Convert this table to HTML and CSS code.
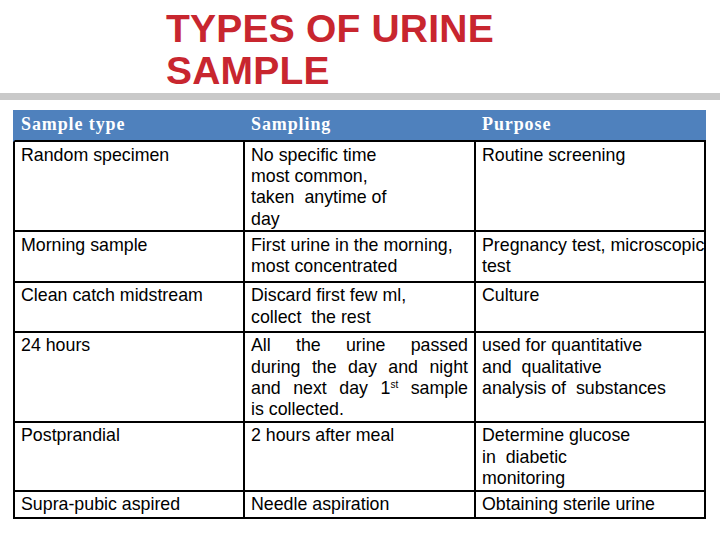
FILE: index.html
```html
<!DOCTYPE html>
<html>
<head>
<meta charset="utf-8">
<link rel="stylesheet" href="styles.css">
</head>
<body>
<header class="title-wrap">
  <h1 class="title">TYPES OF URINE<br>SAMPLE</h1>
</header>
<div class="rule"></div>
<table class="grid">
  <colgroup>
    <col class="c1"><col class="c2"><col class="c3">
  </colgroup>
  <thead>
    <tr>
      <th class="first">Sample type</th>
      <th>Sampling</th>
      <th>Purpose</th>
    </tr>
  </thead>
  <tbody>
    <tr class="r1">
      <td class="first">Random specimen</td>
      <td>No specific time<br>most common,<br>taken &nbsp;anytime of<br>day</td>
      <td>Routine screening</td>
    </tr>
    <tr class="r2">
      <td class="first">Morning sample</td>
      <td>First urine in the morning,<br>most concentrated</td>
      <td class="clip">Pregnancy test, microscopic<br>test</td>
    </tr>
    <tr class="r3">
      <td class="first">Clean catch midstream</td>
      <td>Discard first few ml,<br>collect &nbsp;the rest</td>
      <td>Culture</td>
    </tr>
    <tr class="r4">
      <td class="first">24 hours</td>
      <td class="just">
        <span class="jl">All the urine passed</span>
        <span class="jl">during the day and night</span>
        <span class="jl">and next day 1<sup>st</sup> sample</span>
        <span class="jl last">is collected.</span>
      </td>
      <td>used for quantitative<br>and &nbsp;qualitative<br>analysis of &nbsp;substances</td>
    </tr>
    <tr class="r5">
      <td class="first">Postprandial</td>
      <td>2 hours after meal</td>
      <td>Determine glucose<br>in &nbsp;diabetic<br>monitoring</td>
    </tr>
    <tr class="r6">
      <td class="first">Supra-pubic aspired</td>
      <td>Needle aspiration</td>
      <td>Obtaining sterile urine</td>
    </tr>
  </tbody>
</table>
</body>
</html>
```
FILE: styles.css
```css
html, body {
  margin: 0;
  padding: 0;
  background: #ffffff;
}
body {
  width: 720px;
  height: 540px;
  overflow: hidden;
  font-family: "Liberation Sans", Arial, sans-serif;
}
.title-wrap {
  padding: 8px 0 0 166px;
}
.title {
  margin: 0;
  font-family: "Liberation Sans", Arial, sans-serif;
  font-weight: bold;
  font-size: 39px;
  line-height: 42px;
  color: #c8262f;
  letter-spacing: 0.2px;
}
.rule {
  height: 7px;
  background: #c9c9c9;
  margin-top: 1px;
}
.grid {
  margin: 10px 0 0 13px;
  width: 693px;
  table-layout: fixed;
  border-collapse: separate;
  border-spacing: 0;
  font-size: 17.8px;
  line-height: 21.4px;
  color: #000;
}
.c1 { width: 232px; }
.c2 { width: 231px; }
.c3 { width: 230px; }
.grid th {
  box-sizing: border-box;
  height: 32px;
  background: #4f81bd;
  color: #ffffff;
  font-family: "Liberation Serif", "Times New Roman", serif;
  font-weight: bold;
  font-size: 18px;
  letter-spacing: 0.9px;
  text-align: left;
  padding: 0 6px;
  border-bottom: 2px solid #000;
  vertical-align: middle;
}
.grid th.first {
  border-left: 2px solid transparent;
}
.grid td {
  box-sizing: border-box;
  vertical-align: top;
  padding: 2.5px 6px 0 6px;
  border-right: 2px solid #000;
  border-bottom: 2px solid #000;
  white-space: nowrap;
}
.grid td.first {
  border-left: 2px solid #000;
}
.grid td.clip {
  overflow: hidden;
}
.r2 td { padding-bottom: 3.5px; }
.r3 td { padding-bottom: 2.5px; }
.r6 td { padding-bottom: 1.5px; }
.just .jl {
  display: block;
  text-align: justify;
  text-align-last: justify;
  white-space: normal;
}
.just .jl.last {
  text-align-last: left;
}
.grid sup {
  font-size: 10px;
  line-height: 0;
  vertical-align: 6px;
}
```
